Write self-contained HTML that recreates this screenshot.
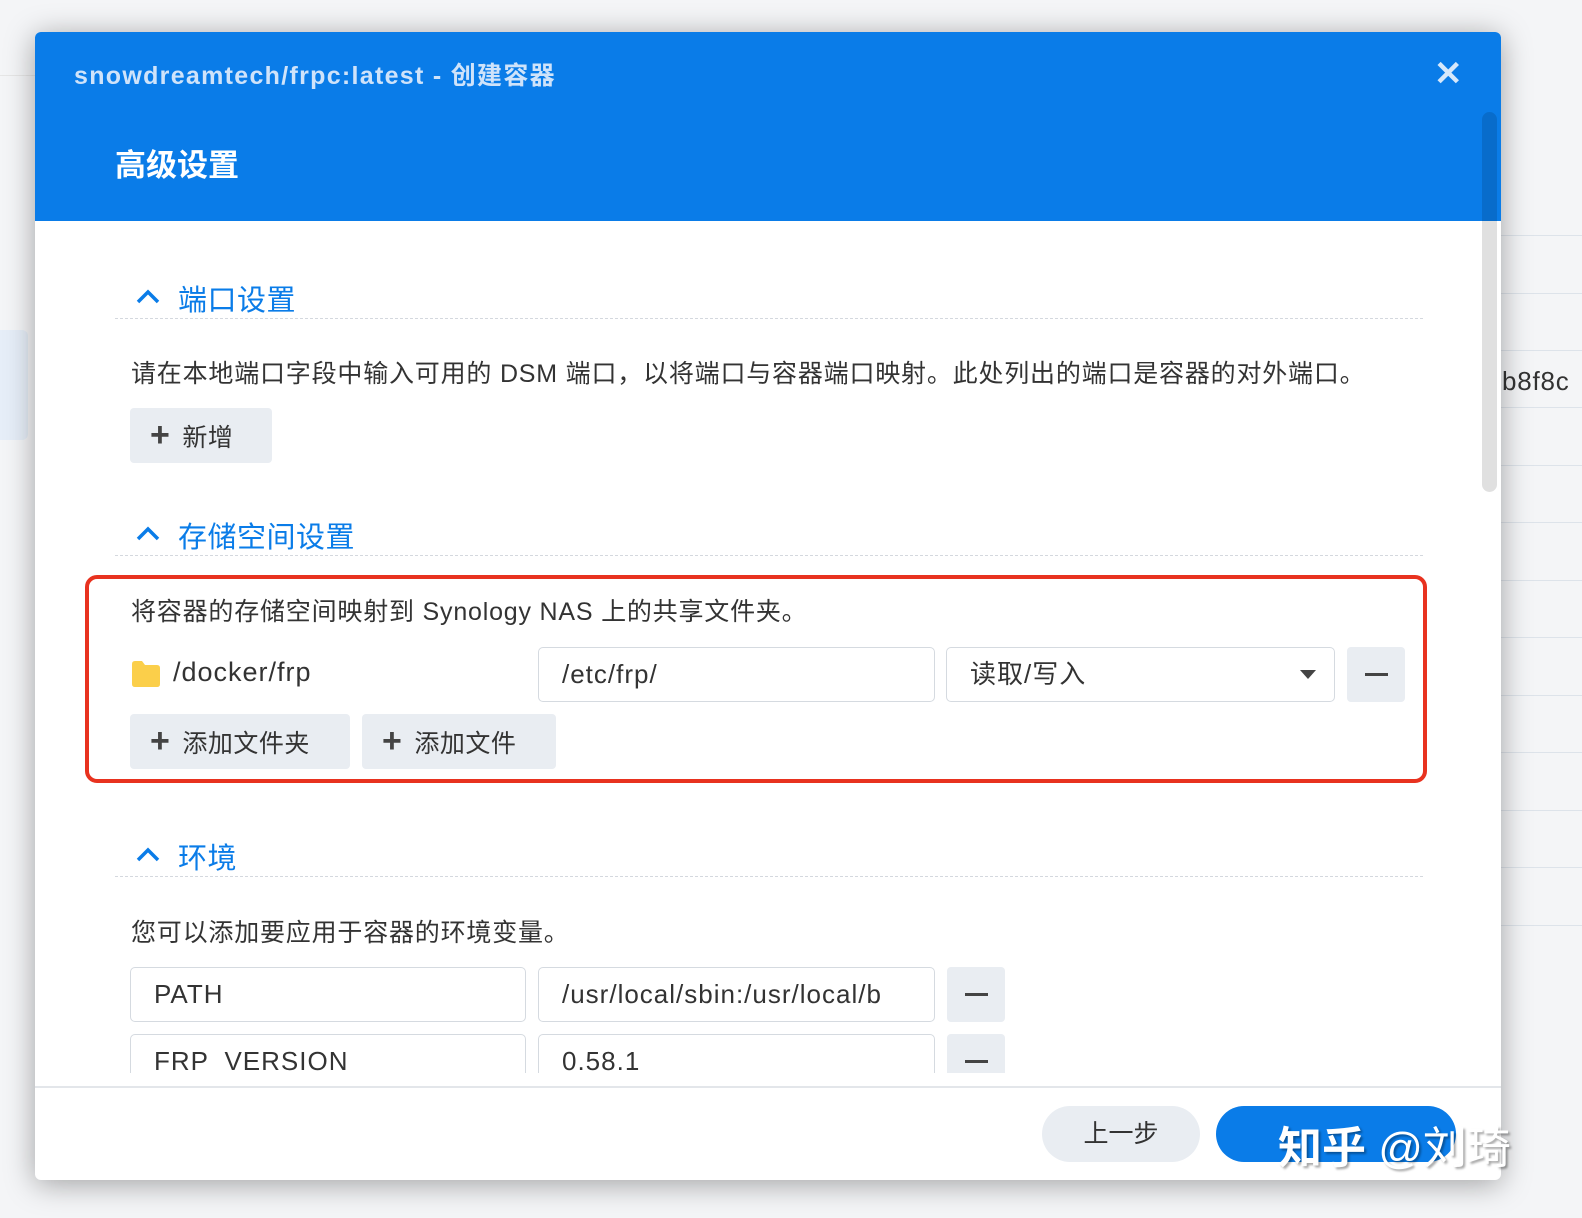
<!DOCTYPE html>
<html><head><meta charset="utf-8"><style>
*{margin:0;padding:0;box-sizing:border-box}
body{width:1582px;height:1218px;background:#f4f5f7;position:relative;overflow:hidden;font-family:"Liberation Sans","Noto Sans CJK SC",sans-serif;color:#333}
.a{position:absolute}
.bgline{position:absolute;left:1500px;width:82px;height:1px;background:#dde3ea}
.dlg{position:absolute;left:35px;top:32px;width:1466px;height:1148px;background:#fff;border-radius:6px;box-shadow:0 4px 30px rgba(0,0,0,.35);overflow:hidden}
.hd{position:absolute;left:0;top:0;width:100%;height:189px;background:#0a7ce8}
.t{font-size:25px;letter-spacing:0.8px;white-space:nowrap}
.sec{position:absolute;left:80px;width:1308px;border-bottom:1.5px dashed #d4d8de;height:42px}
.sec span{position:absolute;left:63px;top:0;font-size:29px;letter-spacing:0.5px;color:#0a7ce8}
.sec svg{position:absolute;left:20px;top:10px}
.btn{position:absolute;background:#e9edf2;border-radius:4px;font-size:25px;letter-spacing:0.5px;color:#333;height:55px;line-height:55px;white-space:nowrap}
.btn b{font-weight:bold;font-size:34px;margin:0 12px 0 20px;color:#444}
.inp{position:absolute;border:1.5px solid #d5dae0;border-radius:5px;height:55px;line-height:52px;font-size:26px;letter-spacing:1px;padding-left:23px;color:#333;background:#fff;overflow:hidden;white-space:nowrap}
.min{position:absolute;width:58px;height:55px;background:#e9edf2;border-radius:4px}
.min:after{content:"";position:absolute;left:18px;top:26px;width:23px;height:3px;background:#444}
</style></head><body>
<div class="a" style="left:0;top:330px;width:28px;height:110px;background:#e6eef8;border-radius:0 6px 6px 0"></div>
<div class="a" style="left:0;top:75px;width:35px;height:1px;background:#e6e6e6"></div>
<div class="bgline" style="top:235px"></div><div class="bgline" style="top:293px"></div><div class="bgline" style="top:350px"></div><div class="bgline" style="top:407px"></div><div class="bgline" style="top:465px"></div><div class="bgline" style="top:522px"></div><div class="bgline" style="top:580px"></div><div class="bgline" style="top:637px"></div><div class="bgline" style="top:695px"></div><div class="bgline" style="top:752px"></div><div class="bgline" style="top:810px"></div><div class="bgline" style="top:867px"></div><div class="bgline" style="top:925px"></div>
<div class="a t" style="left:1502px;top:366px;font-size:26px;color:#333">b8f8c</div>
<div class="dlg">
 <div class="hd"></div>
 <div class="a" style="left:39px;top:24px;color:#cfe3fa;font-size:25px;letter-spacing:1.3px;font-weight:bold;white-space:nowrap">snowdreamtech/frpc:latest - 创建容器</div>
 <div class="a" style="left:1399px;top:22px;color:#d6e8fb;font-size:34px;font-weight:bold">✕</div>
 <div class="a" style="left:80px;top:108px;color:#fff;font-size:31px;font-weight:bold">高级设置</div>
 <div class="a" style="left:1447px;top:80px;width:15px;height:380px;background:rgba(0,0,0,.12);border-radius:8px"></div>

 <div class="sec" style="top:245px"><svg width="26" height="18"><path d="M3 15 L13 5 L23 15" stroke="#0a7ce8" stroke-width="3.5" fill="none"/></svg><span>端口设置</span></div>
 <div class="a t" style="left:96px;top:322px">请在本地端口字段中输入可用的 DSM 端口，以将端口与容器端口映射。此处列出的端口是容器的对外端口。</div>
 <div class="btn" style="left:95px;top:376px;width:142px"><b>+</b>新增</div>

 <div class="sec" style="top:482px"><svg width="26" height="18"><path d="M3 15 L13 5 L23 15" stroke="#0a7ce8" stroke-width="3.5" fill="none"/></svg><span>存储空间设置</span></div>
 <div class="a" style="left:50px;top:543px;width:1342px;height:208px;border:4px solid #e8321f;border-radius:12px"></div>
 <div class="a t" style="left:96px;top:560px">将容器的存储空间映射到 Synology NAS 上的共享文件夹。</div>
 <svg class="a" style="left:96px;top:628px" width="30" height="28"><path d="M1 4 Q1 1 4 1 H11 L14 5 H26 Q29 5 29 8 V24 Q29 27 26 27 H4 Q1 27 1 24Z" fill="#fbcf4a"/></svg>
 <div class="a t" style="left:138px;top:625px;font-size:27px;letter-spacing:1px">/docker/frp</div>
 <div class="inp" style="left:503px;top:615px;width:397px">/etc/frp/</div>
 <div class="inp" style="left:911px;top:615px;width:389px">读取/写入<svg style="position:absolute;right:18px;top:22px" width="16" height="10"><path d="M0 0 H16 L8 9Z" fill="#444"/></svg></div>
 <div class="min" style="left:1312px;top:615px"></div>
 <div class="btn" style="left:95px;top:682px;width:220px"><b>+</b>添加文件夹</div>
 <div class="btn" style="left:327px;top:682px;width:194px"><b>+</b>添加文件</div>

 <div class="sec" style="top:803px"><svg width="26" height="18"><path d="M3 15 L13 5 L23 15" stroke="#0a7ce8" stroke-width="3.5" fill="none"/></svg><span>环境</span></div>
 <div class="a t" style="left:96px;top:881px">您可以添加要应用于容器的环境变量。</div>
 <div class="a" style="left:0;top:930px;width:1420px;height:111px;overflow:hidden">
  <div class="inp" style="left:95px;top:5px;width:396px">PATH</div>
  <div class="inp" style="left:503px;top:5px;width:397px">/usr/local/sbin:/usr/local/b</div>
  <div class="min" style="left:912px;top:5px"></div>
  <div class="inp" style="left:95px;top:72px;width:396px">FRP_VERSION</div>
  <div class="inp" style="left:503px;top:72px;width:397px">0.58.1</div>
  <div class="min" style="left:912px;top:72px"></div>
 </div>
 <div class="a" style="left:0;top:1054px;width:100%;height:1.5px;background:#e3e6ea"></div>
 <div class="a" style="left:1007px;top:1074px;width:158px;height:56px;border-radius:28px;background:#e9edf2;text-align:center;line-height:56px;font-size:25px;color:#333">上一步</div>
 <div class="a" style="left:1181px;top:1074px;width:240px;height:56px;border-radius:28px;background:#0a7ce8"></div>
</div>
<div class="a" style="left:1278px;top:1112px;font-size:44px;font-weight:bold;color:#fff;text-shadow:2px 2px 2px rgba(0,0,0,.35);white-space:nowrap">知乎 <span style="font-weight:normal">@刘琦</span></div>
</body></html>
